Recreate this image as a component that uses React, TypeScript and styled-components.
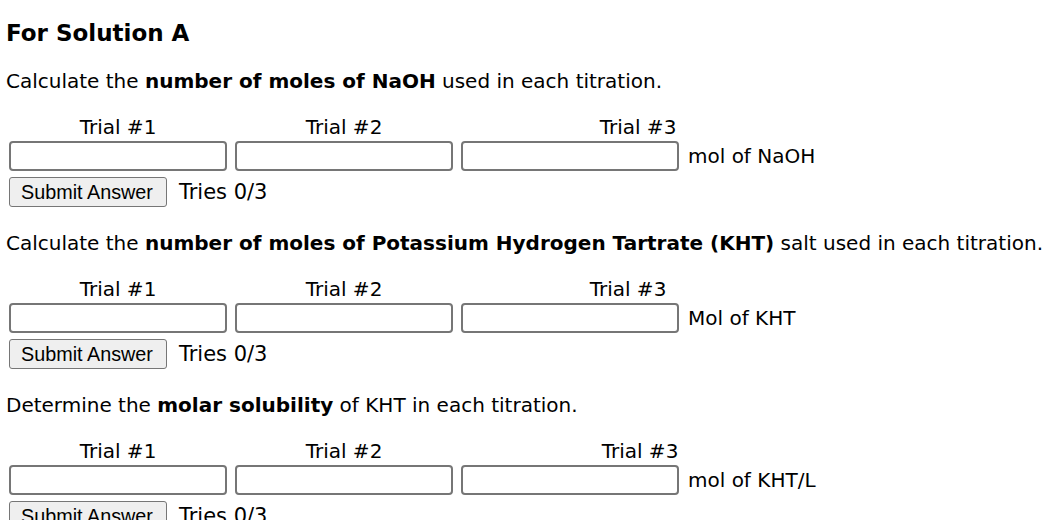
import React from 'react';
import styled, { createGlobalStyle } from 'styled-components';

const GlobalStyle = createGlobalStyle`
  body {
    margin: 0;
    background: #ffffff;
    color: #000000;
    font-family: 'DejaVu Sans', Verdana, sans-serif;
  }
`;

const Page = styled.div`
  padding: 18px 0 0 6px;
  width: 1056px;
  height: 520px;
  box-sizing: border-box;
  overflow: hidden;
`;

const Heading = styled.h3`
  margin: 0 0 21px;
  font-size: 23px;
  line-height: 30px;
  font-weight: 700;
`;

const Section = styled.div`
  margin-bottom: 24px;
`;

const Prompt = styled.p`
  margin: 0 0 22px;
  font-size: 20px;
  line-height: 24px;
  white-space: nowrap;
`;

const TrialHeader = styled.div`
  display: flex;
  gap: 8px;
  padding-left: 3px;
  height: 24px;
  align-items: center;
  margin-bottom: 2px;
`;

const TrialLabel = styled.div<{ shift: number }>`
  width: 218px;
  text-align: center;
  font-size: 20px;
  line-height: 24px;
  white-space: nowrap;
  transform: translateX(${({ shift }) => shift}px);
`;

const InputRow = styled.div`
  display: flex;
  align-items: center;
  gap: 8px;
  padding-left: 3px;
`;

const AnswerInput = styled.input`
  width: 218px;
  height: 30px;
  box-sizing: border-box;
  border: 2px solid #767676;
  border-radius: 4px;
  background: #ffffff;
  padding: 2px 4px;
  font-size: 16px;
  &:focus {
    outline: none;
  }
`;

const Unit = styled.span`
  margin-left: 1px;
  font-size: 20px;
  line-height: 24px;
  white-space: nowrap;
`;

const SubmitRow = styled.div`
  display: flex;
  align-items: center;
  gap: 12px;
  margin-top: 6px;
  padding-left: 3px;
`;

const SubmitButton = styled.button`
  height: 30px;
  padding: 0 13px 0 11px;
  box-sizing: border-box;
  border: 1px solid #767676;
  border-radius: 3px;
  background: #efefef;
  color: #000000;
  font-family: 'Liberation Sans', Arial, sans-serif;
  font-size: 19.8px;
`;

const Tries = styled.span`
  font-size: 21px;
  line-height: 24px;
`;

interface Question {
  lead: string;
  bold: string;
  tail: string;
  unit: string;
  thirdShift: number;
}

const questions: Question[] = [
  {
    lead: 'Calculate the ',
    bold: 'number of moles of NaOH',
    tail: ' used in each titration.',
    unit: 'mol of NaOH',
    thirdShift: 68,
  },
  {
    lead: 'Calculate the ',
    bold: 'number of moles of Potassium Hydrogen Tartrate (KHT)',
    tail: ' salt used in each titration.',
    unit: 'Mol of KHT',
    thirdShift: 58,
  },
  {
    lead: 'Determine the ',
    bold: 'molar solubility',
    tail: ' of KHT in each titration.',
    unit: 'mol of KHT/L',
    thirdShift: 70,
  },
];

function TitrationQuestion({ q }: { q: Question }) {
  return (
    <Section>
      <Prompt>
        {q.lead}
        <b>{q.bold}</b>
        {q.tail}
      </Prompt>
      <TrialHeader>
        <TrialLabel shift={0}>Trial #1</TrialLabel>
        <TrialLabel shift={0}>Trial #2</TrialLabel>
        <TrialLabel shift={q.thirdShift}>Trial #3</TrialLabel>
      </TrialHeader>
      <InputRow>
        <AnswerInput type="text" />
        <AnswerInput type="text" />
        <AnswerInput type="text" />
        <Unit>{q.unit}</Unit>
      </InputRow>
      <SubmitRow>
        <SubmitButton type="button">Submit Answer</SubmitButton>
        <Tries>Tries 0/3</Tries>
      </SubmitRow>
    </Section>
  );
}

export default function App() {
  return (
    <>
      <GlobalStyle />
      <Page>
        <Heading>For Solution A</Heading>
        {questions.map((q) => (
          <TitrationQuestion key={q.unit} q={q} />
        ))}
      </Page>
    </>
  );
}
